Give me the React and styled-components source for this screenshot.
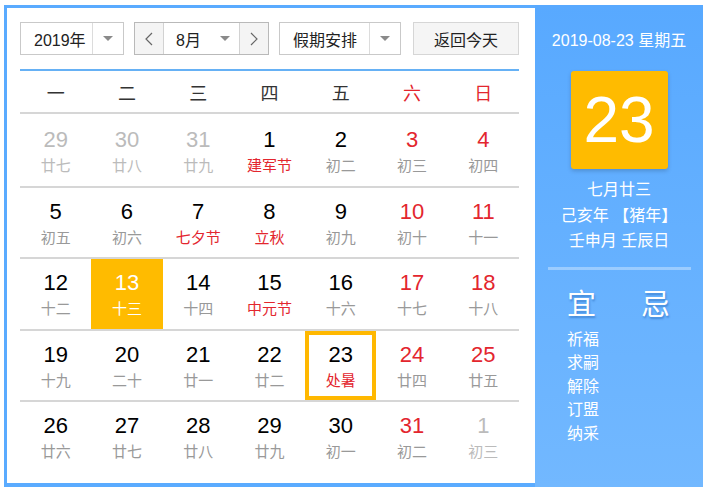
import React from "react";
import styled, { createGlobalStyle, css } from "styled-components";

const GlobalStyle = createGlobalStyle`
  body {
    margin: 0;
    background: #fff;
    font-family: "Liberation Sans", Arial, "Noto Sans CJK SC", sans-serif;
  }
`;

const RED = "#e3262e";
const BLUE = "#5aabff";

const Frame = styled.div`
  display: flex;
  width: 699px;
  height: 482px;
  margin: 5px 0 0 4px;
`;

const LeftPane = styled.div`
  box-sizing: border-box;
  width: 531px;
  height: 100%;
  border: 3px solid ${BLUE};
  border-right: none;
  border-bottom-width: 4px;
  padding: 14px 16px 0 13px;
  background: #fff;
`;

const Toolbar = styled.div`
  display: flex;
  align-items: center;
  height: 33px;
`;

const Select = styled.div`
  box-sizing: border-box;
  display: flex;
  align-items: stretch;
  height: 33px;
  width: ${(p) => p.$w}px;
  margin-left: ${(p) => p.$ml || 0}px;
  border: 1px solid #c9c9c9;
  background: #fff;
  color: #222;
  font-size: 16px;
`;

const SelectText = styled.div`
  flex: 1;
  display: flex;
  align-items: center;
  padding-left: ${(p) => p.$pl}px;
`;

const Caret = styled.div`
  width: 30px;
  display: flex;
  align-items: center;
  justify-content: center;
  border-left: 1px solid #dcdcdc;
  &::after {
    content: "";
    border-left: 5px solid transparent;
    border-right: 5px solid transparent;
    border-top: 5px solid #8a8a8a;
  }
`;

const MonthGroup = styled.div`
  box-sizing: border-box;
  display: flex;
  height: 33px;
  margin-left: 10px;
  border: 1px solid #b9b9b9;
`;

const Arrow = styled.div`
  width: 28px;
  display: flex;
  align-items: center;
  justify-content: center;
  background: #f4f4f4;
  color: #666;
  ${(p) =>
    p.$left
      ? css`border-right: 1px solid #d2d2d2;`
      : css`border-left: 1px solid #d2d2d2;`}
`;

const MonthSelect = styled.div`
  display: flex;
  width: 75px;
  background: #fff;
  font-size: 16px;
  color: #222;
`;

const MonthCaret = styled(Caret)`
  border-left: none;
  width: 28px;
`;

const TodayButton = styled.div`
  box-sizing: border-box;
  margin-left: auto;
  width: 106px;
  height: 33px;
  display: flex;
  align-items: center;
  justify-content: center;
  border: 1px solid #d6d6d6;
  background: #f5f5f5;
  font-size: 16px;
  color: #222;
`;

const Table = styled.div`
  margin-top: 14px;
  border-top: 2px solid #66b1f5;
`;

const WeekHead = styled.div`
  box-sizing: border-box;
  display: grid;
  grid-template-columns: repeat(7, 1fr);
  height: 43px;
  align-items: center;
  border-bottom: 2px solid #d6d6d6;
`;

const WeekDay = styled.div`
  text-align: center;
  font-size: 18px;
  color: ${(p) => (p.$red ? RED : "#333")};
`;

const Row = styled.div`
  box-sizing: border-box;
  display: grid;
  grid-template-columns: repeat(7, 1fr);
  height: 71.5px;
  & + & {
    border-top: 2px solid #d6d6d6;
  }
`;

const Cell = styled.div`
  box-sizing: border-box;
  display: flex;
  flex-direction: column;
  align-items: center;
  padding-top: ${(p) => (p.$first ? 13 : 11)}px;
  background: ${(p) => (p.$selected ? "#ffbb00" : "transparent")};
  ${(p) =>
    p.$today &&
    css`
      box-shadow: inset 0 0 0 4px #ffb800;
    `}
`;

const Num = styled.div`
  font-size: 22px;
  line-height: 26px;
  color: ${(p) => p.$c};
`;

const Lunar = styled.div`
  margin-top: 3px;
  font-size: 15px;
  line-height: 20px;
  color: ${(p) => p.$c};
`;

const RightPane = styled.div`
  flex: 1;
  display: flex;
  flex-direction: column;
  align-items: center;
  background: linear-gradient(#58a9ff, #72b8ff);
  color: #fff;
`;

const DateLine = styled.div`
  margin-top: 26px;
  font-size: 16px;
  line-height: 20px;
`;

const BigDay = styled.div`
  margin-top: 20px;
  width: 97px;
  height: 98px;
  border-radius: 3px;
  background: #ffbb00;
  box-shadow: 0 2px 4px rgba(0, 0, 0, 0.18);
  display: flex;
  align-items: center;
  justify-content: center;
  font-size: 64px;
  line-height: 1;
`;

const LunarInfo = styled.div`
  margin-top: 8px;
  text-align: center;
  font-size: 16px;
  line-height: 25.5px;
`;

const Divider = styled.div`
  margin-top: 13px;
  width: 143px;
  height: 3px;
  background: rgba(255, 255, 255, 0.35);
`;

const Advice = styled.div`
  display: flex;
  align-self: flex-start;
  margin: 19px 0 0 32px;
  gap: 42px;
`;

const AdviceCol = styled.div`
  display: flex;
  flex-direction: column;
`;

const AdviceHead = styled.div`
  font-size: 29px;
  line-height: 32px;
  text-shadow: 1px 2px 2px rgba(0, 60, 140, 0.35);
`;

const AdviceList = styled.div`
  margin-top: 7px;
  display: flex;
  flex-direction: column;
`;

const AdviceItem = styled.div`
  font-size: 16px;
  line-height: 23.5px;
`;

const weeks = ["一", "二", "三", "四", "五", "六", "日"];

const days = [
  [[29, "廿七", "o"], [30, "廿八", "o"], [31, "廿九", "o"], [1, "建军节", "f"], [2, "初二"], [3, "初三", "w"], [4, "初四", "w"]],
  [[5, "初五"], [6, "初六"], [7, "七夕节", "f"], [8, "立秋", "f"], [9, "初九"], [10, "初十", "w"], [11, "十一", "w"]],
  [[12, "十二"], [13, "十三", "s"], [14, "十四"], [15, "中元节", "f"], [16, "十六"], [17, "十七", "w"], [18, "十八", "w"]],
  [[19, "十九"], [20, "二十"], [21, "廿一"], [22, "廿二"], [23, "处暑", "t"], [24, "廿四", "w"], [25, "廿五", "w"]],
  [[26, "廿六"], [27, "廿七"], [28, "廿八"], [29, "廿九"], [30, "初一"], [31, "初二", "w"], [1, "初三", "o"]],
];

const colorsFor = (kind) => {
  switch (kind) {
    case "o":
      return ["#bbb", "#bbb"];
    case "f":
      return ["#000", RED];
    case "w":
      return [RED, "#999"];
    case "s":
      return ["#fff", "#fff"];
    case "t":
      return ["#000", RED];
    default:
      return ["#000", "#999"];
  }
};

const yi = ["祈福", "求嗣", "解除", "订盟", "纳采"];

const App = () => {
  return (
    <>
      <GlobalStyle />
      <Frame>
        <LeftPane>
          <Toolbar>
            <Select $w={104}>
              <SelectText $pl={13}>2019年</SelectText>
              <Caret />
            </Select>
            <MonthGroup>
              <Arrow $left>
                <svg width="8" height="14" viewBox="0 0 8 14">
                  <path d="M7 1 L1 7 L7 13" fill="none" stroke="#666" strokeWidth="1.2" />
                </svg>
              </Arrow>
              <MonthSelect>
                <SelectText $pl={12}>8月</SelectText>
                <MonthCaret />
              </MonthSelect>
              <Arrow>
                <svg width="8" height="14" viewBox="0 0 8 14">
                  <path d="M1 1 L7 7 L1 13" fill="none" stroke="#666" strokeWidth="1.2" />
                </svg>
              </Arrow>
            </MonthGroup>
            <Select $w={122} $ml={10}>
              <SelectText $pl={13}>假期安排</SelectText>
              <Caret />
            </Select>
            <TodayButton>返回今天</TodayButton>
          </Toolbar>
          <Table>
            <WeekHead>
              {weeks.map((w, i) => (
                <WeekDay key={w} $red={i >= 5}>
                  {w}
                </WeekDay>
              ))}
            </WeekHead>
            {days.map((row, ri) => (
              <Row key={ri}>
                {row.map(([n, l, k], ci) => {
                  const [nc, lc] = colorsFor(k);
                  return (
                    <Cell key={ci} $first={ri === 0} $selected={k === "s"} $today={k === "t"}>
                      <Num $c={nc}>{n}</Num>
                      <Lunar $c={lc}>{l}</Lunar>
                    </Cell>
                  );
                })}
              </Row>
            ))}
          </Table>
        </LeftPane>
        <RightPane>
          <DateLine>2019-08-23 星期五</DateLine>
          <BigDay>23</BigDay>
          <LunarInfo>
            <div>七月廿三</div>
            <div>己亥年 【猪年】</div>
            <div>壬申月 壬辰日</div>
          </LunarInfo>
          <Divider />
          <Advice>
            <AdviceCol>
              <AdviceHead>宜</AdviceHead>
              <AdviceList>
                {yi.map((t) => (
                  <AdviceItem key={t}>{t}</AdviceItem>
                ))}
              </AdviceList>
            </AdviceCol>
            <AdviceCol>
              <AdviceHead>忌</AdviceHead>
            </AdviceCol>
          </Advice>
        </RightPane>
      </Frame>
    </>
  );
};

export default App;
